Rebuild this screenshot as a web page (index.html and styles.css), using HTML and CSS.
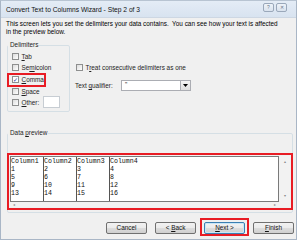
FILE: index.html
```html
<!DOCTYPE html>
<html>
<head>
<meta charset="utf-8">
<link rel="stylesheet" href="styles.css">
</head>
<body>
<div class="window">
  <div class="titlebar">
    <span class="title">Convert Text to Columns Wizard - Step 2 of 3</span>
    <div class="tbtns">
      <span class="tbtn">?</span>
      <span class="tbtn">&#x2715;</span>
    </div>
  </div>
  <div class="body">
    <p class="desc">This screen lets you set the delimiters your data contains.&nbsp; You can see how your text is affected<br>in the preview below.</p>
    <div class="top">
      <fieldset class="delims">
        <legend>Delimiters</legend>
        <div class="cb-row"><span class="cb"></span><span><u>T</u>ab</span></div>
        <div class="cb-row"><span class="cb"></span><span>Se<u>m</u>icolon</span></div>
        <div class="cb-row hl-comma"><span class="cb checked">&#x2713;</span><span><u>C</u>omma</span></div>
        <div class="cb-row space"><span class="cb"></span><span><u>S</u>pace</span></div>
        <div class="cb-row"><span class="cb"></span><span><u>O</u>ther:</span><span class="txt"></span></div>
      </fieldset>
      <div class="opts">
        <div class="cb-row consec"><span class="cb"></span><span>T<u>r</u>eat consecutive delimiters as one</span></div>
        <div class="qual">
          <span class="qlabel">Text <u>q</u>ualifier:</span>
          <div class="combo"><span class="val">"</span><span class="drop"><svg width="5" height="3" viewBox="0 0 5 3"><path d="M0 0H5L2.5 3Z" fill="#000"/></svg></span></div>
        </div>
      </div>
    </div>
    <fieldset class="pgroup">
      <legend>Data <u>p</u>review</legend>
      <div class="preview">
        <div class="grid">
          <div class="col"><div>Column1</div><div>1</div><div>5</div><div>9</div><div>13</div></div>
          <div class="col"><div>Column2</div><div>2</div><div>6</div><div>10</div><div>14</div></div>
          <div class="col"><div>Column3</div><div>3</div><div>7</div><div>11</div><div>15</div></div>
          <div class="col last"><div>Column4</div><div>4</div><div>8</div><div>12</div><div>16</div></div>
        </div>
        <div class="vscroll"><span>&#x25B4;</span><span>&#x25BE;</span></div>
        <div class="hscroll"><span>&#x25C2;</span><span>&#x25B8;</span></div>
        <div class="corner"></div>
      </div>
    </fieldset>
    <div class="buttons">
      <span class="btn">Cancel</span>
      <span class="btn">&lt; <u>B</u>ack</span>
      <span class="btn default hl-next"><u>N</u>ext &gt;</span>
      <span class="btn"><u>F</u>inish</span>
    </div>
  </div>
</div>
</body>
</html>
```
FILE: styles.css
```css
*, *::before, *::after { box-sizing: border-box; }
html, body { margin: 0; padding: 0; }
body {
  width: 300px;
  height: 242px;
  background: #ffffff;
  font-family: "Liberation Sans", Arial, sans-serif;
  font-size: 6.4px;
  color: #1e1e1e;
  overflow: hidden;
}
u { text-decoration: underline; text-underline-offset: 0.5px; }
.window {
  width: 297px;
  height: 240px;
  background: #f0f0f0;
  border: 1px solid #a9b6c6;
  border-top-color: #b8c4d2;
}
.titlebar {
  height: 17px;
  background: linear-gradient(#e4ecf6, #d8e3f0);
  display: flex;
  align-items: center;
  justify-content: space-between;
  padding: 0 9px 0 5px;
  border-bottom: 1px solid #cdd7e3;
}
.title { font-size: 6.7px; color: #111; }
.tbtns { display: flex; gap: 2px; margin-top: -3px; }
.tbtn {
  width: 11px;
  height: 9px;
  border: 1px solid #9aa8ba;
  border-radius: 2px;
  background: linear-gradient(#eef3f9, #d9e2ee);
  font-size: 5px;
  line-height: 7px;
  text-align: center;
  color: #6b7787;
}
.body { padding: 0 0 0 5px; }
.desc {
  margin: 2px 0 0 0;
  line-height: 8px;
  white-space: nowrap;
  color: #000;
  font-size: 6.4px;
}
.top { display: flex; margin-top: 5px; }
fieldset {
  margin: 0;
  border: 1px solid #d5dfe5;
  border-radius: 2px;
  padding: 0;
  min-width: 0;
}
legend {
  padding: 0 1px 0 2px;
  margin-left: 0;
  line-height: 8px;
  color: #1e1e1e;
}
.delims {
  margin-left: 1px;
  width: 63px;
  height: 71px;
  padding-top: 2px;
}
.cb-row {
  height: 11.25px;
  display: flex;
  align-items: center;
  padding-left: 4px;
  gap: 2.5px;
  white-space: nowrap;
}
.cb-row.space { margin-top: 0.8px; height: 11px; }
.cb {
  width: 7px;
  height: 7px;
  border: 1px solid #8e8f8f;
  background: linear-gradient(135deg, #dcdcdc, #ffffff);
  flex: none;
  font-size: 6px;
  line-height: 5px;
  text-align: center;
  color: #23329b;
  font-family: "DejaVu Sans", sans-serif;
}
.cb.checked { background: #fff; }
.txt {
  width: 17px;
  height: 12px;
  background: #fff;
  border: 1px solid #c7cdd3;
  margin-left: 1px;
}
.hl-comma { position: relative; }
.hl-comma::after {
  content: "";
  position: absolute;
  left: -1px;
  top: -1px;
  width: 39px;
  height: 14px;
  border: 2px solid #e81c24;
}
.opts { margin-left: 6px; }
.consec { margin-top: 20.5px; padding-left: 0; gap: 2.5px; }
.qual {
  display: flex;
  align-items: center;
  margin-top: 7.5px;
  height: 11px;
}
.qlabel { width: 46px; margin-left: -1px; }
.combo {
  width: 70px;
  height: 11px;
  background: #fff;
  border: 1px solid #abadb3;
  display: flex;
  justify-content: space-between;
}
.val { padding-left: 3px; line-height: 8px; }
.drop {
  width: 10px;
  height: 9px;
  border-left: 1px solid #abadb3;
  background: linear-gradient(#f4f4f4, #dedede);
  display: flex;
  align-items: center;
  justify-content: center;
}
.pgroup {
  margin: 17px 0 0 1px;
  width: 286px;
  height: 84px;
}
.preview {
  position: relative;
  margin: 19px 0 0 2px;
  width: 280px;
  height: 51px;
  display: grid;
  grid-template-columns: 269px 11px;
  grid-template-rows: 46px 5px;
}
.preview::after {
  content: "";
  position: absolute;
  left: -3px;
  top: -3px;
  right: -3px;
  bottom: -3px;
  border: 2px solid #e81c24;
}
.grid {
  background: #fff;
  border: 1px solid #7a7a7a;
  display: flex;
  font-family: "Liberation Mono", "Courier New", monospace;
  font-size: 6.6px;
  line-height: 8px;
  color: #111;
  padding-top: 1px;
}
.col {
  width: 33px;
  border-right: 1px solid #555;
  margin-top: -1px;
  padding-top: 1px;
}
.col.last { border-right: 0; }
.vscroll {
  display: flex;
  flex-direction: column;
  justify-content: space-between;
  align-items: center;
  padding: 3px 0 3px 1px;
  font-size: 4px;
  line-height: 6px;
  color: #8a8a8a;
  background: #f2f2f2;
}
.hscroll {
  display: flex;
  justify-content: space-between;
  align-items: center;
  padding: 0 3px;
  font-size: 4px;
  line-height: 5px;
  color: #8a8a8a;
  background: #f2f2f2;
}
.corner { background: #f2f2f2; }
.buttons {
  display: flex;
  justify-content: flex-end;
  gap: 8px;
  margin-top: 9px;
  padding-right: 2px;
}
.btn {
  width: 41px;
  height: 12px;
  border: 1px solid #707070;
  border-radius: 2px;
  background: linear-gradient(#f2f2f2 0%, #ebebeb 45%, #dddddd 50%, #cfcfcf 100%);
  text-align: center;
  line-height: 10px;
  color: #111;
}
.btn.default {
  border-color: #3c7fb1;
  box-shadow: inset 0 0 0 1px #c8e6f7;
}
.hl-next { position: relative; }
.hl-next::after {
  content: "";
  position: absolute;
  left: -5px;
  right: -5px;
  top: -5px;
  bottom: -3px;
  border: 2px solid #e81c24;
}
```
